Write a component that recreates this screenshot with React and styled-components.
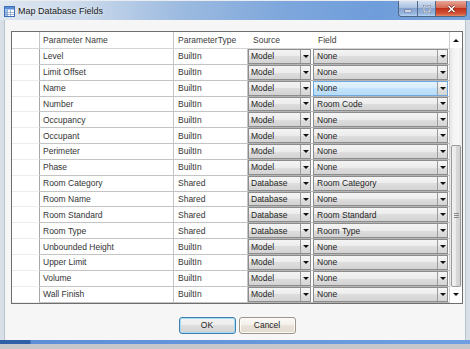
import styled, { createGlobalStyle } from "styled-components";

const GlobalStyle = createGlobalStyle`
  html, body { margin: 0; padding: 0; background: #c8c8c8; }
  body { font-family: "Liberation Sans", Arial, sans-serif; }
  * { box-sizing: border-box; }
`;

const columns = [
  { key: "head", width: 28 },
  { key: "name", width: 134, title: "Parameter Name", pad: 3 },
  { key: "type", width: 74, title: "ParameterType", pad: 4 },
  { key: "source", width: 64, title: "Source", pad: 5 },
  { key: "field", width: 137, title: "Field", pad: 6 },
];
const template = columns.map((c) => `${c.width}px`).join(" ");

const rows = [
  ["Level", "BuiltIn", "Model", "None"],
  ["Limit Offset", "BuiltIn", "Model", "None"],
  ["Name", "BuiltIn", "Model", "None", true],
  ["Number", "BuiltIn", "Model", "Room Code"],
  ["Occupancy", "BuiltIn", "Model", "None"],
  ["Occupant", "BuiltIn", "Model", "None"],
  ["Perimeter", "BuiltIn", "Model", "None"],
  ["Phase", "BuiltIn", "Model", "None"],
  ["Room Category", "Shared", "Database", "Room Category"],
  ["Room Name", "Shared", "Database", "None"],
  ["Room Standard", "Shared", "Database", "Room Standard"],
  ["Room Type", "Shared", "Database", "Room Type"],
  ["Unbounded Height", "BuiltIn", "Model", "None"],
  ["Upper Limit", "BuiltIn", "Model", "None"],
  ["Volume", "BuiltIn", "Model", "None"],
  ["Wall Finish", "BuiltIn", "Model", "None"],
];

const Window = styled.div`
  width: 470px;
  height: 349px;
  display: flex;
  flex-direction: column;
  background: #d9dfe6;
  overflow: hidden;
`;

const TitleBar = styled.div`
  height: 20px;
  display: flex;
  align-items: flex-start;
  background: linear-gradient(90deg, #dfe7f0 0%, #c9d8ea 18%, #9dbbe0 38%, #7ea7dc 60%, #6f9ddb 80%, #7aa5de 100%);
  border-top: 1px solid #e9edf2;
`;

const TitleIcon = styled.svg`
  width: 11px;
  height: 11px;
  margin: 5px 0 0 4px;
  flex: none;
`;

const TitleText = styled.span`
  margin: 5px 0 0 3px;
  font-size: 9px;
  color: #1b1b1b;
  text-shadow: 0 0 4px rgba(255, 255, 255, 0.8);
`;

const Controls = styled.div`
  margin-left: auto;
  margin-right: 3px;
  display: flex;
  height: 16px;
  border: 1px solid #4f6684;
  border-top: none;
  border-radius: 0 0 4px 4px;
  overflow: hidden;
`;

const CtrlButton = styled.div`
  width: ${(p) => (p.close ? 31 : 18)}px;
  height: 100%;
  display: flex;
  align-items: center;
  justify-content: center;
  border-left: ${(p) => (p.first ? "none" : "1px solid #54698a")};
  background: ${(p) =>
    p.close
      ? "linear-gradient(#e8a596 0%, #d56b55 45%, #c2321b 50%, #d2553a 85%, #e58a62 100%)"
      : "linear-gradient(#d4e1f2 0%, #a9c0e0 45%, #86a3cf 50%, #98b7e0 85%, #b9d3f1 100%)"};
`;

const Client = styled.div`
  flex: 1;
  margin: 0 4px;
  background: #f6f6f6;
  border-left: 1px solid #b9c3ce;
  border-right: 1px solid #b9c3ce;
  display: flex;
  flex-direction: column;
  padding: 11px 3px 0 6px;
`;

const Frame = styled.div`
  width: 452px;
  display: flex;
  border: 1px solid #6e6e6e;
  background: #ffffff;
`;

const Grid = styled.div`
  width: 437px;
  display: flex;
  flex-direction: column;
`;

const HeaderRow = styled.div`
  display: grid;
  grid-template-columns: ${template};
  height: 17px;
  background: #ffffff;
  border-bottom: 1px solid #d5d5d5;
`;

const HeaderCell = styled.div`
  display: flex;
  align-items: center;
  padding-left: ${(p) => p.pad || 0}px;
  font-size: 8.5px;
  color: #3a3a3a;
  border-right: ${(p) => (p.divider ? "1px solid #c4c4c4" : "none")};
  white-space: nowrap;
`;

const Row = styled.div`
  display: grid;
  grid-template-columns: ${template};
  height: 15.85px;
`;

const RowHead = styled.div`
  border-right: 1px solid #a8a8a8;
  border-bottom: 1px solid #ececec;
`;

const Cell = styled.div`
  display: flex;
  align-items: center;
  padding-left: ${(p) => p.pad}px;
  font-size: 8.5px;
  color: #333333;
  border-right: 1px solid #c4c4c4;
  border-bottom: 1px solid #c4c4c4;
  white-space: nowrap;
  overflow: hidden;
`;

const ComboCell = styled.div`
  display: flex;
  padding: 0 1px 0 ${(p) => (p.last ? 1 : 0)}px;
  border-bottom: 1px solid #b4b4b4;
`;

const Combo = styled.div`
  flex: 1;
  display: flex;
  border: 1px solid ${(p) => (p.selected ? "#6fa6dc" : "#8c8c8c")};
  background: ${(p) =>
    p.selected
      ? "linear-gradient(#e4f3fd 0%, #d6ecfb 50%, #c3e3fa 50%, #b7dcf8 100%)"
      : "linear-gradient(#f4f4f4 0%, #ececec 50%, #dedede 50%, #d3d3d3 100%)"};
  font-size: 8.5px;
  color: #1e1e1e;
  overflow: hidden;
`;

const ComboText = styled.span`
  flex: 1;
  display: flex;
  align-items: center;
  padding-left: ${(p) => p.pad}px;
  white-space: nowrap;
`;

const ComboArrow = styled.span`
  width: 10px;
  flex: none;
  display: flex;
  align-items: center;
  justify-content: center;
  border-left: 1px solid #9c9c9c;
  background: linear-gradient(#f6f6f6 0%, #ededed 50%, #dfdfdf 50%, #d6d6d6 100%);
`;

const Triangle = styled.span`
  width: 0;
  height: 0;
  border-left: 3px solid transparent;
  border-right: 3px solid transparent;
  border-${(p) => (p.up ? "bottom" : "top")}: 3px solid #111111;
`;

const ScrollBar = styled.div`
  width: 13px;
  display: flex;
  flex-direction: column;
  border-left: 1px solid #d0d0d0;
  background: linear-gradient(90deg, #e6e6e6 0%, #f4f4f4 30%, #f7f7f7 70%, #ececec 100%);
`;

const ScrollButton = styled.div`
  height: 16px;
  flex: none;
  display: flex;
  align-items: center;
  justify-content: center;
  background: #ffffff;
`;

const Track = styled.div`
  flex: 1;
  display: flex;
  flex-direction: column;
  justify-content: flex-end;
  padding: 0 1px;
`;

const Thumb = styled.div`
  height: 142px;
  border: 1px solid #9b9b9b;
  border-radius: 2px;
  background: linear-gradient(90deg, #f1f1f1 0%, #e9e9e9 50%, #d9d9d9 50%, #d2d2d2 100%);
  display: flex;
  flex-direction: column;
  align-items: center;
  justify-content: center;
  gap: 1px;
`;

const Grip = styled.span`
  width: 5px;
  height: 1px;
  background: #8a8a8a;
`;

const ButtonRow = styled.div`
  display: flex;
  justify-content: center;
  gap: 3px;
  margin-top: 13px;
  padding-left: 1px;
`;

const DialogButton = styled.button`
  width: 57px;
  height: 17px;
  padding: 0;
  border-radius: 3px;
  font-family: "Liberation Sans", Arial, sans-serif;
  font-size: 8.5px;
  color: #1e1e1e;
  border: 1px solid ${(p) => (p.primary ? "#3c7fb1" : "#9c958c")};
  box-shadow: inset 0 0 0 1px ${(p) => (p.primary ? "#a8dcf5" : "#fdfbf7")};
  background: ${(p) =>
    p.primary
      ? "linear-gradient(#f3f3f3 0%, #ececec 50%, #dedede 50%, #d2d2d2 100%)"
      : "linear-gradient(#fbfaf8 0%, #f3efe9 50%, #e9e3da 50%, #e2dace 100%)"};
`;

const BottomEdge = styled.div`
  height: 9px;
  display: flex;
  flex-direction: column;
`;

const BlueLine = styled.div`
  height: 4px;
  background: linear-gradient(90deg, #2f5fa6 0px, #2f5fa6 30px, #5d8fd8 31px, #6f9fe0 100%);
`;

const GreyLine = styled.div`
  flex: 1;
  background: #c5c7ca;
`;

function AppIcon() {
  return (
    <TitleIcon viewBox="0 0 11 11">
      <rect x="0.5" y="0.5" width="10" height="10" fill="#ffffff" stroke="#3d6fb6" />
      <rect x="1" y="1" width="9" height="2.5" fill="#5a8fd6" />
      <rect x="1" y="3.5" width="2.5" height="6.5" fill="#9fc0ea" />
      <path d="M1 6.5H10M1 8.5H10M3.5 3.5V10M6.5 3.5V10" stroke="#6f93c4" strokeWidth="0.6" />
    </TitleIcon>
  );
}

function Minimize() {
  return (
    <svg width="8" height="8" viewBox="0 0 8 8">
      <rect x="0.5" y="5" width="7" height="2" fill="#ffffff" stroke="#40567a" strokeWidth="0.5" />
    </svg>
  );
}

function Maximize() {
  return (
    <svg width="8" height="8" viewBox="0 0 8 8">
      <rect x="1" y="1" width="6" height="6" fill="none" stroke="#40567a" strokeWidth="2" />
      <rect x="1" y="1" width="6" height="6" fill="none" stroke="#ffffff" strokeWidth="1.1" />
    </svg>
  );
}

function CloseGlyph() {
  return (
    <svg width="9" height="8" viewBox="0 0 9 8">
      <path d="M1.5 1L7.5 7M7.5 1L1.5 7" stroke="#6b1a10" strokeWidth="2.6" />
      <path d="M1.5 1L7.5 7M7.5 1L1.5 7" stroke="#ffffff" strokeWidth="1.6" />
    </svg>
  );
}

export default function App() {
  return (
    <Window>
      <GlobalStyle />
      <TitleBar>
        <AppIcon />
        <TitleText>Map Database Fields</TitleText>
        <Controls>
          <CtrlButton first>
            <Minimize />
          </CtrlButton>
          <CtrlButton>
            <Maximize />
          </CtrlButton>
          <CtrlButton close>
            <CloseGlyph />
          </CtrlButton>
        </Controls>
      </TitleBar>
      <Client>
        <Frame>
          <Grid>
            <HeaderRow>
              <HeaderCell divider />
              {columns.slice(1).map((c, i) => (
                <HeaderCell key={c.key} pad={c.pad} divider={i === 0}>
                  {c.title}
                </HeaderCell>
              ))}
            </HeaderRow>
            {rows.map(([name, type, source, field, selected]) => (
              <Row key={name}>
                <RowHead />
                <Cell pad={3}>{name}</Cell>
                <Cell pad={4}>{type}</Cell>
                <ComboCell>
                  <Combo>
                    <ComboText pad={2}>{source}</ComboText>
                    <ComboArrow>
                      <Triangle />
                    </ComboArrow>
                  </Combo>
                </ComboCell>
                <ComboCell last>
                  <Combo selected={selected}>
                    <ComboText pad={3}>{field}</ComboText>
                    <ComboArrow>
                      <Triangle />
                    </ComboArrow>
                  </Combo>
                </ComboCell>
              </Row>
            ))}
          </Grid>
          <ScrollBar>
            <ScrollButton>
              <Triangle up />
            </ScrollButton>
            <Track>
              <Thumb>
                <Grip />
                <Grip />
                <Grip />
              </Thumb>
            </Track>
            <ScrollButton>
              <Triangle />
            </ScrollButton>
          </ScrollBar>
        </Frame>
        <ButtonRow>
          <DialogButton primary>OK</DialogButton>
          <DialogButton>Cancel</DialogButton>
        </ButtonRow>
      </Client>
      <BottomEdge>
        <BlueLine />
        <GreyLine />
      </BottomEdge>
    </Window>
  );
}
